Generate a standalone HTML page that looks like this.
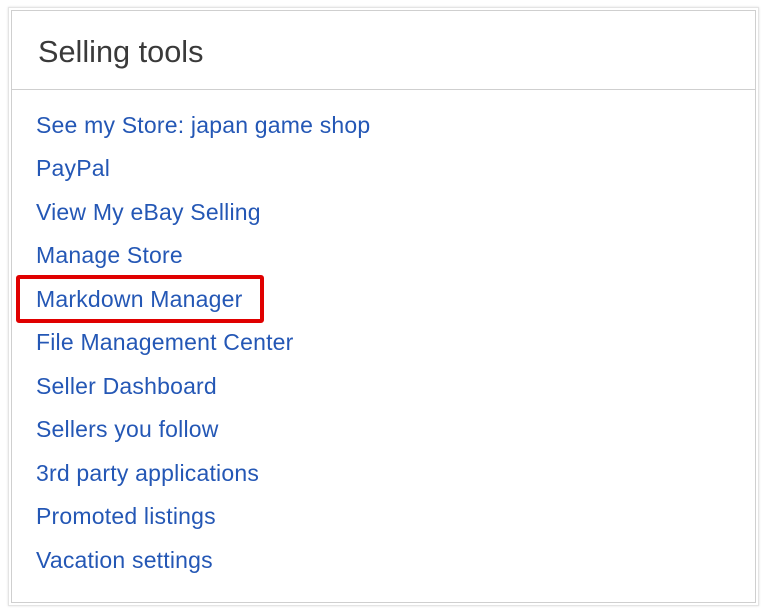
<!DOCTYPE html>
<html><head><style>
body{margin:0;width:768px;height:611px;background:#fff;position:relative;overflow:hidden;font-family:"Liberation Sans",Arial,sans-serif}
.outer{position:absolute;left:8px;top:7px;width:749px;height:597px;border:1px solid #e4e4e4;box-shadow:0 0 2px #ddd}
.box{position:absolute;left:11px;top:10px;width:743px;height:591px;border:1px solid #cfcfcf;background:#fff}
.hdr{position:absolute;left:0;top:0;width:743px;height:78px;border-bottom:1px solid #cfcfcf}
.hdr span{position:absolute;left:26px;top:23px;font-size:30.7px;color:#3a3a3a}
.l{position:absolute;left:24px;font-size:23px;letter-spacing:0.2px;color:#2457b5;white-space:nowrap;line-height:26px}
.red{position:absolute;left:16px;top:275px;width:240px;height:40px;border:4px solid #e00000;border-radius:3px}
</style></head><body>
<div class="outer"></div>
<div class="box">
<div class="hdr"><span>Selling tools</span></div>
<div class="l" style="top:101px">See my Store: japan game shop</div>
<div class="l" style="top:144px">PayPal</div>
<div class="l" style="top:188px">View My eBay Selling</div>
<div class="l" style="top:231px">Manage Store</div>
<div class="l" style="top:275px">Markdown Manager</div>
<div class="l" style="top:318px">File Management Center</div>
<div class="l" style="top:362px">Seller Dashboard</div>
<div class="l" style="top:405px">Sellers you follow</div>
<div class="l" style="top:449px">3rd party applications</div>
<div class="l" style="top:492px">Promoted listings</div>
<div class="l" style="top:536px">Vacation settings</div>
</div>
<div class="red"></div>
</body></html>
